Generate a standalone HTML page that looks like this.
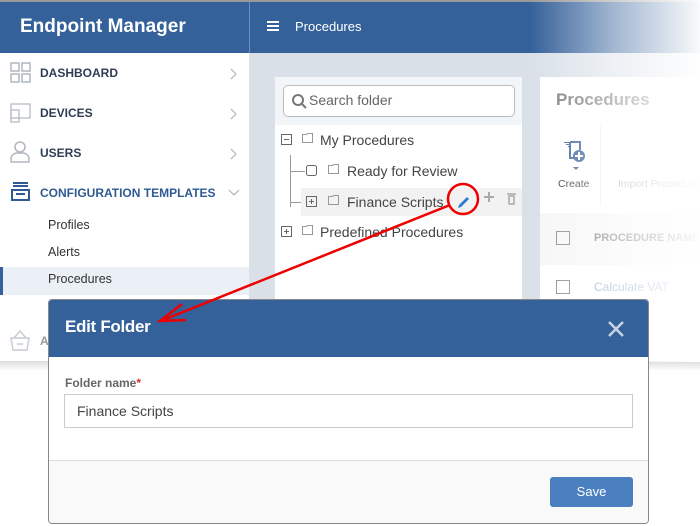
<!DOCTYPE html>
<html><head><style>
*{margin:0;padding:0;box-sizing:border-box}
body{width:700px;height:526px;position:relative;overflow:hidden;background:#fff;font-family:"Liberation Sans",sans-serif}
.abs{position:absolute}
.nav{font-size:12px;font-weight:bold;color:#2f3d55}
.sub{font-size:12.5px;color:#333}
.t{font-size:14px;color:#444}
</style></head><body>
<div class="abs" style="left:0;top:0;width:700px;height:362px;background:#d9e0e8"></div>
<div class="abs" style="left:0;top:0;width:700px;height:2px;background:#999"></div>
<div class="abs" style="left:0;top:2px;width:700px;height:51px;background:#35619a"></div>
<div class="abs" style="left:249px;top:2px;width:1px;height:51px;background:#6f8fba"></div>
<div class="abs" style="left:20px;top:16px;color:#fff;font-size:19px;font-weight:bold">Endpoint Manager</div>
<div class="abs" style="left:267px;top:21px;width:12px;height:2px;background:#fff;box-shadow:0 4px 0 #fff,0 8px 0 #fff"></div>
<div class="abs" style="left:295px;top:19px;color:#fff;font-size:13px">Procedures</div>
<!-- sidebar -->
<div class="abs" style="left:0;top:53px;width:249px;height:242px;background:#fff"></div>
<svg class="abs" style="left:10px;top:62px" width="22" height="22"><g fill="none" stroke="#b0b7c0" stroke-width="1.5"><rect x="1" y="1" width="8" height="8"/><rect x="12" y="1" width="8" height="8"/><rect x="1" y="12" width="8" height="8"/><rect x="12" y="12" width="8" height="8"/></g></svg>
<svg class="abs" style="left:10px;top:102px" width="22" height="22"><g fill="none" stroke="#b0b7c0" stroke-width="1.2"><rect x="1" y="2" width="19" height="14"/><rect x="1" y="8" width="8" height="12"/></g></svg>
<svg class="abs" style="left:10px;top:141px" width="22" height="22"><g fill="none" stroke="#b0b7c0" stroke-width="1.5"><circle cx="10" cy="6" r="5"/><path d="M1 21v-3a6 6 0 0 1 6-6h6a6 6 0 0 1 6 6v3z"/></g></svg>
<svg class="abs" style="left:10px;top:182px" width="22" height="22"><g fill="#2f5a94"><rect x="3" y="0" width="15" height="2"/><rect x="3" y="3" width="15" height="2"/><path d="M1 7h19v12H1zM3 9v8h15V9zM6 11h9v2H6z"/></g></svg>
<div class="abs nav" style="left:40px;top:66px">DASHBOARD</div>
<div class="abs nav" style="left:40px;top:106px">DEVICES</div>
<div class="abs nav" style="left:40px;top:146px">USERS</div>
<div class="abs nav" style="left:40px;top:186px;color:#2f5a94">CONFIGURATION TEMPLATES</div>
<svg class="abs" style="left:230px;top:68px" width="8" height="12"><path d="M1 1l5 5-5 5" fill="none" stroke="#aaa"/></svg>
<svg class="abs" style="left:230px;top:108px" width="8" height="12"><path d="M1 1l5 5-5 5" fill="none" stroke="#aaa"/></svg>
<svg class="abs" style="left:230px;top:148px" width="8" height="12"><path d="M1 1l5 5-5 5" fill="none" stroke="#aaa"/></svg>
<svg class="abs" style="left:228px;top:189px" width="12" height="8"><path d="M1 1l5 5 5-5" fill="none" stroke="#aaa"/></svg>
<div class="abs sub" style="left:48px;top:218px">Profiles</div>
<div class="abs sub" style="left:48px;top:245px">Alerts</div>
<div class="abs" style="left:0;top:267px;width:249px;height:28px;background:#ebeff6;border-left:3px solid #35619a"></div>
<div class="abs sub" style="left:48px;top:272px">Procedures</div>
<div class="abs" style="left:0;top:295px;width:249px;height:66px;background:#fff"></div>
<div class="abs" style="left:40px;top:334px;color:#999;font-size:12px;font-weight:bold">A</div>
<svg class="abs" style="left:10px;top:330px" width="20" height="22"><path d="M4 8l6-7 6 7M1 8h18l-2 12H3z M7 14h6" fill="none" stroke="#c5ccd4" stroke-width="1.5"/></svg>
<div class="abs" style="left:0;top:361px;width:700px;height:10px;background:linear-gradient(#ddd,#fff)"></div>
<!-- tree panel -->
<div class="abs" style="left:275px;top:77px;width:247px;height:222px;background:#fff"></div>
<div class="abs" style="left:275px;top:77px;width:247px;height:48px;background:#f3f6f9"></div>
<div class="abs" style="left:283px;top:85px;width:232px;height:32px;border:1px solid #bbb;border-radius:5px;background:#fff"></div>
<svg class="abs" style="left:291px;top:93px" width="16" height="16"><circle cx="7" cy="7" r="5" fill="none" stroke="#777" stroke-width="2"/><path d="M11 11l4 4" stroke="#777" stroke-width="2"/></svg>
<div class="abs" style="left:309px;top:92px;color:#666;font-size:14px">Search folder</div>
<div class="abs" style="left:290px;top:155px;width:1px;height:52px;background:#999"></div>
<div class="abs" style="left:290px;top:171px;width:15px;height:1px;background:#999"></div>
<div class="abs" style="left:290px;top:202px;width:15px;height:1px;background:#999"></div>
<div class="abs" style="left:301px;top:188px;width:221px;height:28px;background:#f2f2f2"></div>
<svg class="abs" style="left:0;top:0" width="700" height="526">
<g fill="none" stroke="#666"><rect x="281.5" y="134.5" width="10" height="10"/><path d="M284 139.5h5"/>
<rect x="306.5" y="165.5" width="10" height="10" rx="2"/>
<rect x="306.5" y="196.5" width="10" height="10"/><path d="M309 201.5h5M311.5 199v5"/>
<rect x="281.5" y="226.5" width="10" height="10"/><path d="M284 231.5h5M286.5 229v5"/></g>
<g fill="none" stroke="#999"><path d="M302.5 142.5v-8h4l1-1h5v9z"/><path d="M328.5 173.5v-8h4l1-1h5v9z"/><path d="M328.5 204.5v-8h4l1-1h5v9z"/><path d="M302.5 234.5v-8h4l1-1h5v9z"/></g>
<path d="M459 205l8-8 2 2-8 8-3 1z" fill="#2d7bd0"/>
<path d="M489 192v10M484 197h10" stroke="#aaa" stroke-width="2"/>
<path d="M507 194h9M509 196h5v8h-5z" fill="none" stroke="#aaa" stroke-width="1.5"/>
</svg>
<div class="abs t" style="left:320px;top:132px">My Procedures</div>
<div class="abs t" style="left:347px;top:163px">Ready for Review</div>
<div class="abs t" style="left:347px;top:194px">Finance Scripts</div>
<div class="abs t" style="left:320px;top:224px">Predefined Procedures</div>
<!-- procedures panel -->
<div class="abs" style="left:540px;top:77px;width:160px;height:284px;background:#fff"></div>
<div class="abs" style="left:556px;top:90px;color:#777;font-size:17px;font-weight:bold">Procedures</div>
<div class="abs" style="left:540px;top:213px;width:160px;height:52px;background:#f6f6f6"></div>
<div class="abs" style="left:556px;top:231px;width:14px;height:14px;border:1px solid #888"></div>
<div class="abs" style="left:594px;top:232px;color:#777;font-size:11px;font-weight:bold">PROCEDURE NAME</div>
<div class="abs" style="left:556px;top:280px;width:14px;height:14px;border:1px solid #888"></div>
<div class="abs" style="left:594px;top:280px;color:#8aa6cc;font-size:12px">Calculate VAT</div>
<svg class="abs" style="left:560px;top:140px" width="30" height="35"><g fill="#2f5a94"><path d="M4 2h6v1H4zM6 4h4v1H6zM8 6h2v1H8z"/><path d="M10 2h10v8" fill="none" stroke="#2f5a94" stroke-width="2"/><path d="M10 2v16h6" fill="none" stroke="#2f5a94" stroke-width="2"/><circle cx="19" cy="16" r="6"/><path d="M13 27h6l-3 3z"/></g><path d="M19 12v8M15 16h8" stroke="#fff" stroke-width="2"/></svg>
<div class="abs" style="left:558px;top:178px;color:#333;font-size:10.5px">Create</div>
<div class="abs" style="left:618px;top:178px;color:#aaa;font-size:10.5px;white-space:nowrap">Import Procedure</div>
<div class="abs" style="left:600px;top:125px;width:1px;height:80px;background:#eee"></div>
<!-- fade right -->
<div class="abs" style="left:530px;top:0;width:170px;height:362px;background:linear-gradient(90deg,rgba(255,255,255,0),rgba(255,255,255,.55) 50%,rgba(255,255,255,.97))"></div>
<!-- modal -->
<div class="abs" style="left:48px;top:299px;width:601px;height:225px;background:#fff;border:1px solid #888;border-radius:4px;overflow:hidden">
<div style="height:57px;background:#35619a;position:relative"><div class="abs" style="left:16px;top:17px;color:#fff;font-size:17px;font-weight:bold;letter-spacing:-0.3px">Edit Folder</div>
<svg class="abs" style="left:558px;top:20px" width="18" height="18"><path d="M2 2l14 14M16 2L2 16" stroke="#c8d3e3" stroke-width="2.5"/></svg></div>
<div class="abs" style="left:16px;top:76px;color:#666;font-size:12px;font-weight:bold">Folder name<span style="color:#c33">*</span></div>
<div class="abs" style="left:15px;top:94px;width:569px;height:34px;border:1px solid #ccc"></div>
<div class="abs" style="left:28px;top:103px;color:#444;font-size:14px">Finance Scripts</div>
<div class="abs" style="left:0;top:160px;width:601px;height:65px;background:#f9f9f9;border-top:1px solid #ddd"></div>
<div class="abs" style="left:501px;top:177px;width:83px;height:30px;background:#4a7fc0;border-radius:3px;color:#fff;font-size:13px;text-align:center;line-height:30px">Save</div>
</div>
<!-- annotation -->
<svg class="abs" style="left:0;top:0" width="700" height="526">
<circle cx="463" cy="199" r="15" fill="none" stroke="#e00" stroke-width="2.5"/>
<path d="M450 205L163 320" stroke="#e00" stroke-width="2.5"/>
<path d="M182 304L160 321L186 320" fill="none" stroke="#e00" stroke-width="2.5"/>
</svg>
</body></html>
